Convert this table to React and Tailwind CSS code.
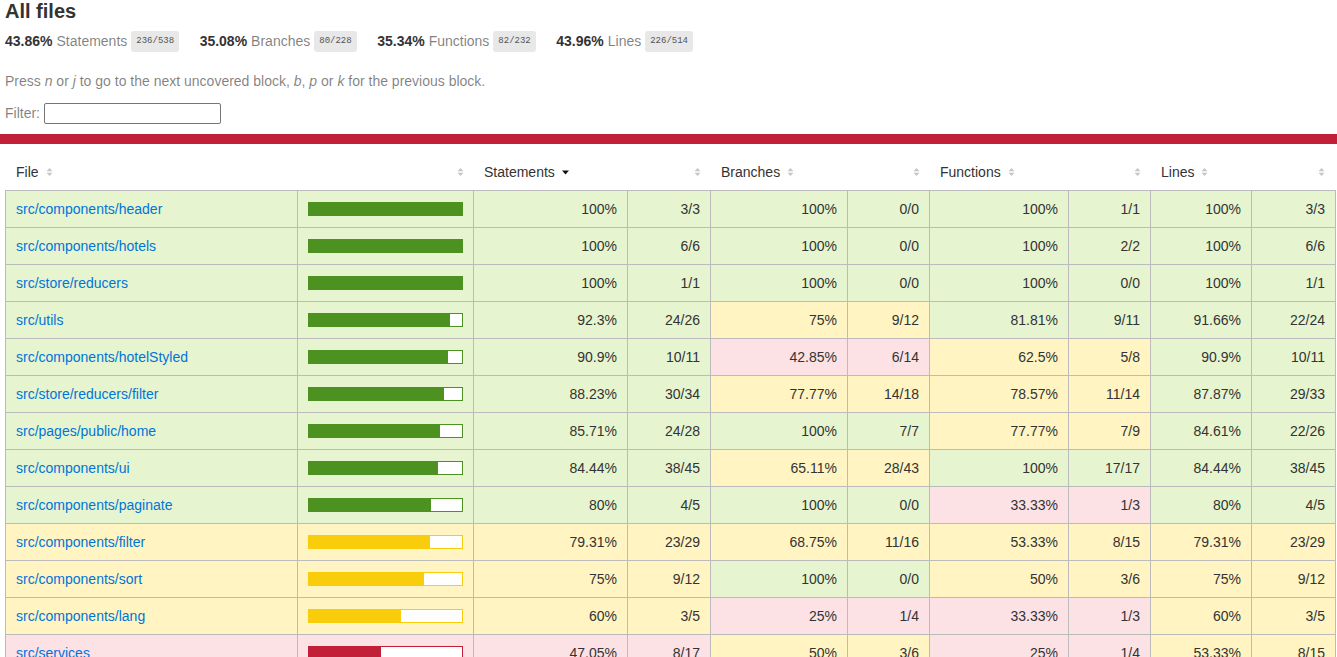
import React from "react";

const rows = [
  ["src/components/header", ["100%", "3/3"], ["100%", "0/0"], ["100%", "1/1"], ["100%", "3/3"]],
  ["src/components/hotels", ["100%", "6/6"], ["100%", "0/0"], ["100%", "2/2"], ["100%", "6/6"]],
  ["src/store/reducers", ["100%", "1/1"], ["100%", "0/0"], ["100%", "0/0"], ["100%", "1/1"]],
  ["src/utils", ["92.3%", "24/26"], ["75%", "9/12"], ["81.81%", "9/11"], ["91.66%", "22/24"]],
  ["src/components/hotelStyled", ["90.9%", "10/11"], ["42.85%", "6/14"], ["62.5%", "5/8"], ["90.9%", "10/11"]],
  ["src/store/reducers/filter", ["88.23%", "30/34"], ["77.77%", "14/18"], ["78.57%", "11/14"], ["87.87%", "29/33"]],
  ["src/pages/public/home", ["85.71%", "24/28"], ["100%", "7/7"], ["77.77%", "7/9"], ["84.61%", "22/26"]],
  ["src/components/ui", ["84.44%", "38/45"], ["65.11%", "28/43"], ["100%", "17/17"], ["84.44%", "38/45"]],
  ["src/components/paginate", ["80%", "4/5"], ["100%", "0/0"], ["33.33%", "1/3"], ["80%", "4/5"]],
  ["src/components/filter", ["79.31%", "23/29"], ["68.75%", "11/16"], ["53.33%", "8/15"], ["79.31%", "23/29"]],
  ["src/components/sort", ["75%", "9/12"], ["100%", "0/0"], ["50%", "3/6"], ["75%", "9/12"]],
  ["src/components/lang", ["60%", "3/5"], ["25%", "1/4"], ["33.33%", "1/3"], ["60%", "3/5"]],
  ["src/services", ["47.05%", "8/17"], ["50%", "3/6"], ["25%", "1/4"], ["53.33%", "8/15"]],
];

const levels = {
  high: { bg: "bg-[#e6f5d0]", fill: "bg-[#4d9221]", border: "border-[#4d9221]" },
  medium: { bg: "bg-[#fff4c2]", fill: "bg-[#f9cd0b]", border: "border-[#f9cd0b]" },
  low: { bg: "bg-[#fce1e5]", fill: "bg-[#c21f39]", border: "border-[#c21f39]" },
};

const levelOf = (pct) => {
  const v = parseFloat(pct);
  if (v >= 80) return "high";
  if (v >= 50) return "medium";
  return "low";
};

const GRID =
  "grid grid-cols-[292px_176px_154px_83px_137px_82px_139px_82px_101px_83px]";

const Sorter = () => (
  <svg width="7" height="10" viewBox="0 0 7 10" className="ml-[7px] shrink-0">
    <path d="M0.5 4.2 L3.5 1 L6.5 4.2 Z" fill="#c6c6c6" />
    <path d="M0.5 5.8 L6.5 5.8 L3.5 9 Z" fill="#c6c6c6" />
  </svg>
);

const SortedDesc = () => (
  <svg width="7" height="10" viewBox="0 0 7 10" className="ml-[7px] shrink-0">
    <path d="M0 3.5 L7 3.5 L3.5 7.5 Z" fill="#111" />
  </svg>
);

const Fraction = ({ children }) => (
  <span className="inline-flex items-center h-[21px] px-[5px] rounded-[3px] bg-[#e8e8e8] text-[#555] text-[9px] font-['Liberation_Mono',monospace]">
    {children}
  </span>
);

const SummaryItem = ({ pct, label, frac }) => (
  <div className="flex items-center gap-[4px] mr-[20.5px]">
    <span className="font-bold text-[#333]">{pct}</span>
    <span className="text-black/50">{label}</span>
    <Fraction>{frac}</Fraction>
  </div>
);

const cell = "px-[10px] py-[10px] leading-[16px] border-r border-[#bbb]";

const Row = ({ r }) => {
  const [file, st, br, fn, ln] = r;
  const stLevel = levels[levelOf(st[0])];
  const pctNum = parseFloat(st[0]);
  const group = (m, last) => {
    const l = levels[levelOf(m[0])];
    return [
      <div key="p" className={`${cell} ${l.bg} text-right`}>{m[0]}</div>,
      <div
        key="a"
        className={`px-[10px] py-[10px] leading-[16px] ${last ? "" : "border-r border-[#bbb]"} ${l.bg} text-right`}
      >
        {m[1]}
      </div>,
    ];
  };
  return (
    <div className={`${GRID} border-b border-[#bbb]`}>
      <div className={`${cell} ${stLevel.bg} whitespace-nowrap`}>
        <span className="text-[#0074d9]">{file}</span>
      </div>
      <div className={`${cell} ${stLevel.bg} flex items-center`}>
        <div className={`w-[155px] h-[14px] border ${stLevel.border} bg-white flex`}>
          <div className={`h-full ${stLevel.fill}`} style={{ width: `${pctNum}%` }} />
        </div>
      </div>
      {group(st)}
      {group(br)}
      {group(fn)}
      {group(ln, true)}
    </div>
  );
};

const Th = ({ children, right, sorted }) => (
  <div
    className={`px-[10px] py-[10px] leading-[16px] flex items-center whitespace-nowrap ${right ? "justify-end" : ""}`}
  >
    {children}
    {sorted ? <SortedDesc /> : <Sorter />}
  </div>
);

export default function App() {
  return (
    <div className="h-screen overflow-hidden bg-white text-[14px] text-[#333] font-['Liberation_Sans',Arial,sans-serif]">
      <div className="px-[5px] pb-[10px]">
        <h1 className="text-[20px] leading-[23px] font-bold text-[#333]">All files</h1>
        <div className="flex items-center h-[21px] mt-[8px]">
          <SummaryItem pct="43.86%" label="Statements" frac="236/538" />
          <SummaryItem pct="35.08%" label="Branches" frac="80/228" />
          <SummaryItem pct="35.34%" label="Functions" frac="82/232" />
          <SummaryItem pct="43.96%" label="Lines" frac="226/514" />
        </div>
        <p className="mt-[21px] leading-[16px] text-black/50">
          Press <em>n</em> or <em>j</em> to go to the next uncovered block, <em>b</em>, <em>p</em> or{" "}
          <em>k</em> for the previous block.
        </p>
        <div className="mt-[14px] flex items-center gap-[4px] h-[21px] text-black/50">
          <span>Filter:</span>
          <input
            type="search"
            className="w-[177px] h-[21px] border border-[#767676] rounded-[2px] bg-white px-[2px] text-[13px] outline-none"
          />
        </div>
      </div>
      <div className="h-[10px] bg-[#c21f39]" />
      <div className="pt-[10px] px-[5px]">
        <div className="w-[1331px]">
          <div className={`${GRID} border-x border-transparent`}>
            <Th>File</Th>
            <Th right />
            <Th sorted>Statements</Th>
            <Th right />
            <Th>Branches</Th>
            <Th right />
            <Th>Functions</Th>
            <Th right />
            <Th>Lines</Th>
            <Th right />
          </div>
          <div className="border border-[#bbb] border-b-0">
            {rows.map((r) => (
              <Row key={r[0]} r={r} />
            ))}
          </div>
        </div>
      </div>
    </div>
  );
}
